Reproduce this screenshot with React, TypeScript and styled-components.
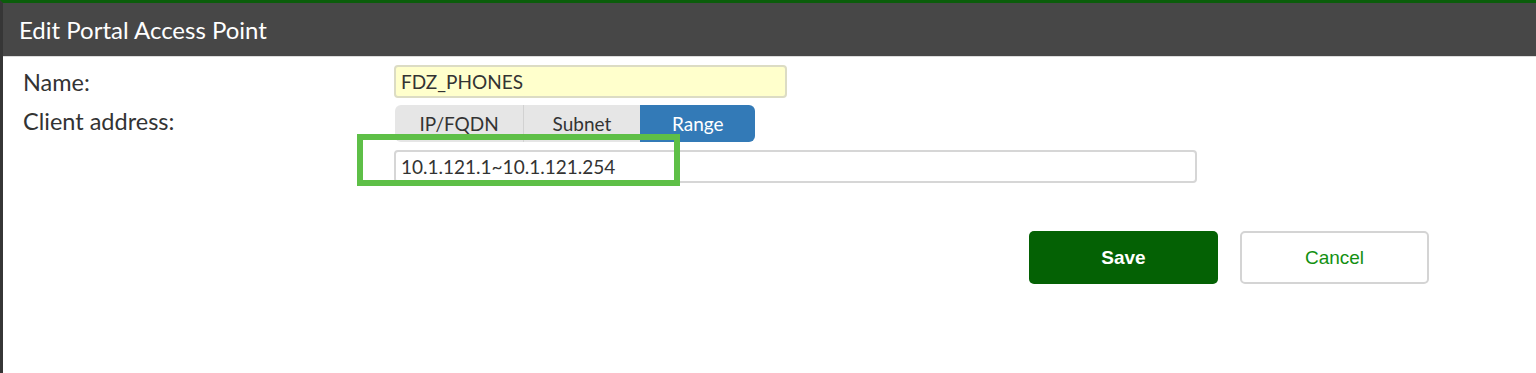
import styled, { createGlobalStyle } from "styled-components";

const Global = createGlobalStyle`
html, body {
  margin: 0;
  padding: 0;
  background: #fff;
}
`;

const Frame = styled.div`
  height: 373px;
  box-sizing: border-box;
  border-top: 3px solid #0b5d0b;
  border-left: 3px solid #363636;
  background: #fff;
  font-family: Lato, "Open Sans", sans-serif;
  color: #333;
`;

const Header = styled.div`
  height: 53px;
  background: #474747;
  border-bottom: 1px solid #dcdcdc;
  display: flex;
  align-items: center;
  padding-left: 16px;
  color: #fff;
  font-size: 24px;
`;

const Form = styled.div`
  display: grid;
  grid-template-columns: 371px 1fr;
  row-gap: 7px;
  padding: 8px 0 0 20px;
`;

const Label = styled.div<{ $top?: number }>`
  font-size: 23.5px;
  display: flex;
  align-items: center;
  height: 33px;
  margin-top: ${(p) => p.$top ?? 0}px;
`;

const TextInput = styled.div<{ $width: number; $bg?: string; $border?: string }>`
  box-sizing: border-box;
  width: ${(p) => p.$width}px;
  height: 33px;
  background: ${(p) => p.$bg ?? "#fff"};
  border: 2px solid ${(p) => p.$border ?? "#d6d6d6"};
  border-radius: 4px;
  display: flex;
  align-items: center;
  padding-left: 5px;
  font-size: 19px;
  color: #333;
`;

const Segments = styled.div`
  display: flex;
  width: 360px;
  height: 37px;
  border-radius: 6px;
  overflow: hidden;
  margin-left: 1px;
`;

const Segment = styled.div<{ $width: number; $active?: boolean }>`
  width: ${(p) => p.$width}px;
  display: flex;
  align-items: center;
  justify-content: center;
  font-size: 19px;
  background: ${(p) => (p.$active ? "#337ab7" : "#e6e6e6")};
  color: ${(p) => (p.$active ? "#fff" : "#333")};
  border-left: 1px solid ${(p) => (p.$active ? "#337ab7" : "#d2d2d2")};
  &:first-child {
    border-left: none;
  }
`;

const RangeWrap = styled.div`
  position: relative;
  margin-top: 1px;
`;

const Highlight = styled.div`
  position: absolute;
  left: -37px;
  top: -16px;
  width: 323px;
  height: 52px;
  box-sizing: border-box;
  border: 6px solid #5ebf47;
  pointer-events: none;
`;

const Actions = styled.div`
  display: flex;
  justify-content: flex-end;
  gap: 22px;
  padding: 48px 107px 0 0;
`;

const Button = styled.div<{ $primary?: boolean }>`
  box-sizing: border-box;
  width: 189px;
  height: 53px;
  border-radius: 5px;
  display: flex;
  align-items: center;
  justify-content: center;
  font-family: "Liberation Sans", Arial, sans-serif;
  font-size: 19px;
  font-weight: ${(p) => (p.$primary ? 700 : 400)};
  background: ${(p) => (p.$primary ? "#046104" : "#fff")};
  color: ${(p) => (p.$primary ? "#fff" : "#129012")};
  border: ${(p) => (p.$primary ? "none" : "2px solid #d4d4d4")};
`;

export default function App() {
  return (
    <>
      <Global />
      <Frame>
        <Header>Edit Portal Access Point</Header>
        <Form>
          <Label>Name:</Label>
          <TextInput $width={393} $bg="#ffffcc" $border="#dcdcc4">
            FDZ_PHONES
          </TextInput>
          <Label $top={-1}>Client address:</Label>
          <Segments>
            <Segment $width={129}>IP/FQDN</Segment>
            <Segment $width={116}>Subnet</Segment>
            <Segment $width={115} $active>
              Range
            </Segment>
          </Segments>
          <div />
          <RangeWrap>
            <TextInput $width={803}>10.1.121.1~10.1.121.254</TextInput>
            <Highlight />
          </RangeWrap>
        </Form>
        <Actions>
          <Button $primary>Save</Button>
          <Button>Cancel</Button>
        </Actions>
      </Frame>
    </>
  );
}
